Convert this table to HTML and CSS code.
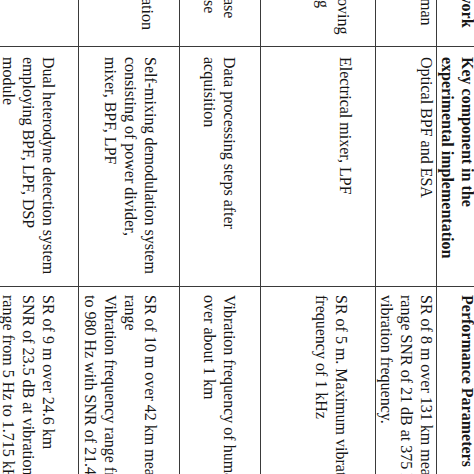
FILE: index.html
```html
<!DOCTYPE html>
<html lang="en">
<head>
<meta charset="utf-8">
<title>Table</title>
<link rel="stylesheet" href="styles.css">
</head>
<body>
<div class="stage">
  <div class="rotor">
    <div class="grid">
      <div class="cell c1 r0"><span class="cut-more">work</span></div>
      <div class="cell c2 r0 head">Key component in the experimental implementation</div>
      <div class="cell c3 r0 head">Performance Parameters</div>

      <div class="cell c1 r1">man</div>
      <div class="cell c2 r1">Optical BPF and ESA</div>
      <div class="cell c3 r1">SR of 8 m over 131 km measurement<br>range SNR of 21 dB at 375 Hz<br>vibration frequency.</div>

      <div class="cell c1 r2 r2a">oving<br>g</div>
      <div class="cell c2 r2">Electrical mixer, LPF</div>
      <div class="cell c3 r2 r2b">SR of 5 m. Maximum vibration<br>frequency of 1 kHz</div>

      <div class="cell c1 r3">ase<br>se</div>
      <div class="cell c2 r3">Data processing steps after acquisition</div>
      <div class="cell c3 r3">Vibration frequency of human activity<br>over about 1 km</div>

      <div class="cell c1 r4 r4a">ation</div>
      <div class="cell c2 r4">Self-mixing demodulation system consisting of power divider, mixer, BPF, LPF</div>
      <div class="cell c3 r4">SR of 10 m over 42 km measurement<br>range<br>Vibration frequency range from 1 Hz<br>to 980 Hz with SNR of 21.4 dB</div>

      <div class="cell c1 r5"></div>
      <div class="cell c2 r5">Dual heterodyne detection system employing BPF, LPF, DSP module</div>
      <div class="cell c3 r5">SR of 9 m over 24.6 km<br>SNR of 23.5 dB at vibration frequency<br>range from 5 Hz to 1.715 kHz</div>
    </div>
  </div>
</div>
</body>
</html>
```

FILE: styles.css
```css
html, body {
  margin: 0;
  padding: 0;
  background: #ffffff;
}

.stage {
  width: 474px;
  height: 474px;
  overflow: hidden;
  background: #ffffff;
}

.rotor {
  width: 474px;
  height: 474px;
  overflow: hidden;
  transform: rotate(90deg);
  transform-origin: 50% 50%;
}

.grid {
  margin-top: -10px;
  display: grid;
  grid-template-columns: 47px 240px 320px;
  grid-template-rows: 48px 61px 115px 81px 101px 100px;
  width: 607px;
  font-family: "Liberation Serif", "Times New Roman", serif;
  font-size: 16px;
  line-height: 20px;
  color: #161616;
}

.cell {
  box-sizing: border-box;
  border-right: 1px solid #3a3a3a;
  border-bottom: 1px solid #3a3a3a;
  overflow: hidden;
}

.c1 {
  padding-left: 0;
  text-indent: -2px;
  white-space: nowrap;
}

.c2 {
  padding-left: 10px;
  padding-right: 9px;
}

.c3 {
  padding-left: 8px;
  white-space: nowrap;
  border-right: none;
}

.head {
  font-weight: bold;
}

.r0 {
  padding-top: 7px;
  font-weight: bold;
}

.cut-more {
  display: inline-block;
  margin-left: -4px;
}

.r1 { padding-top: 0; }
.r2 { padding-top: 20px; }
.r2a { padding-top: 22px; }
.r2b { padding-top: 24px; }
.r3 { padding-top: 21px; }
.r4 { padding-top: 19px; }
.r4a { padding-top: 22px; }
.r5 { padding-top: 20px; }
```
